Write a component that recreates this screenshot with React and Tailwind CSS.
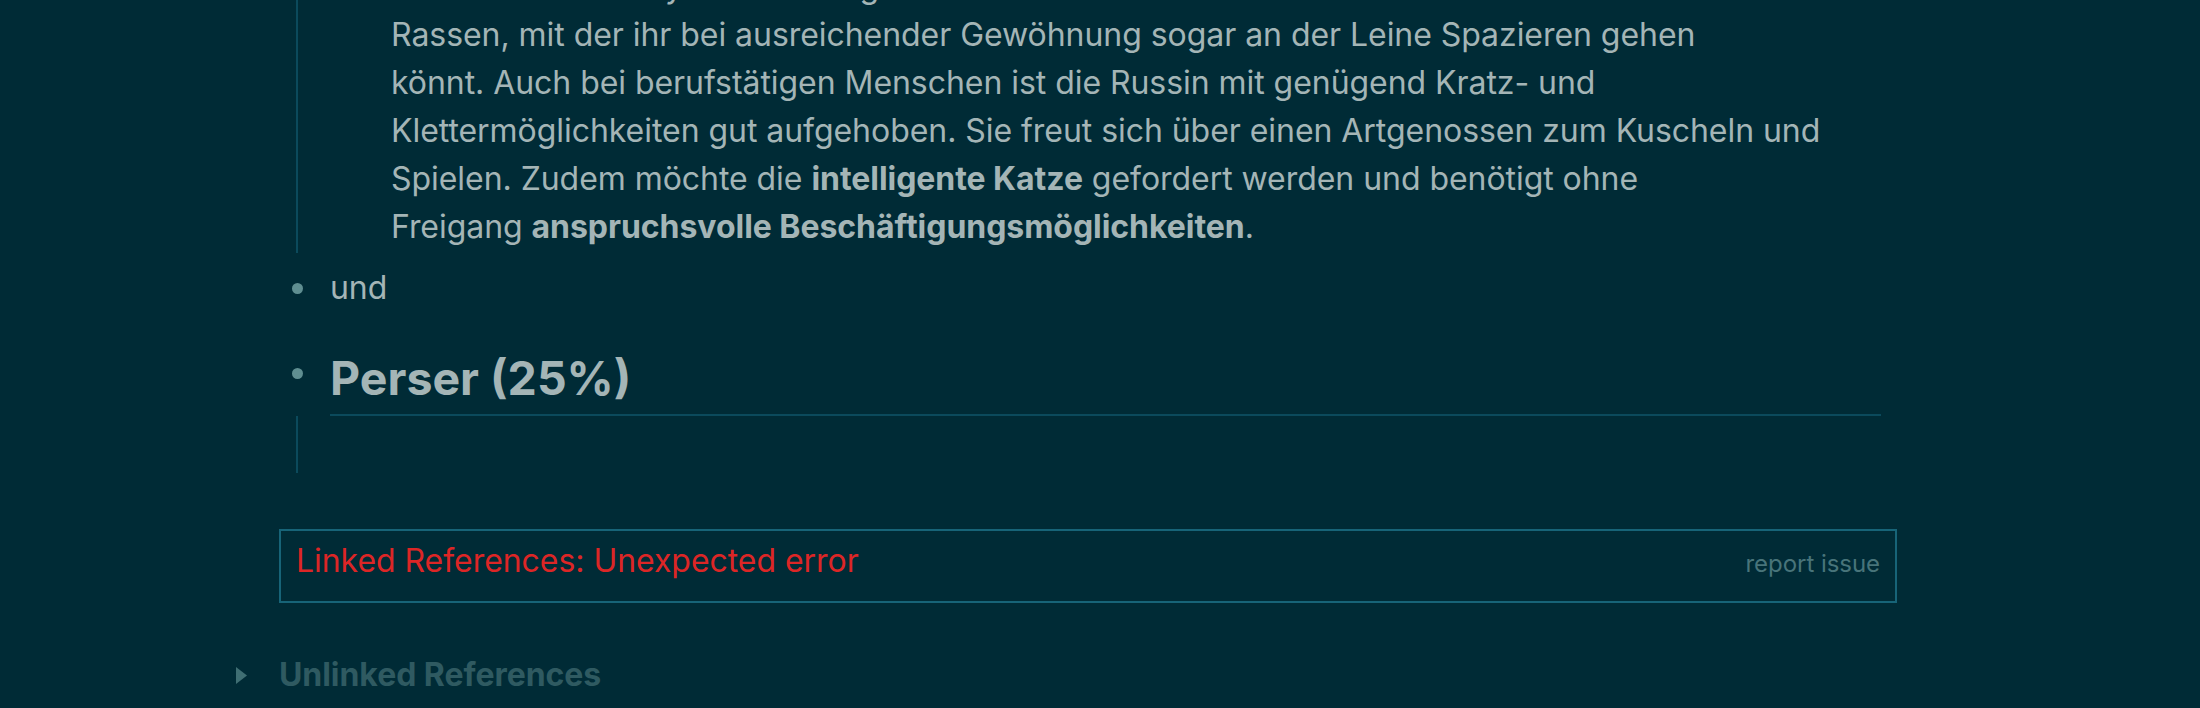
import React from "react";

const lines = [
  "Sie ist eine sehr loyale und ruhige Katze unter den",
  "Rassen, mit der ihr bei ausreichender Gewöhnung sogar an der Leine Spazieren gehen",
  "könnt. Auch bei berufstätigen Menschen ist die Russin mit genügend Kratz- und",
  "Klettermöglichkeiten gut aufgehoben. Sie freut sich über einen Artgenossen zum Kuscheln und",
];

function Bullet({ height }) {
  return (
    <div className={`flex w-[51px] shrink-0 items-center pl-[13px] ${height}`}>
      <span className="h-[11px] w-[11px] rounded-full bg-[#5f8e91]" />
    </div>
  );
}

export default function App() {
  return (
    <div className="h-[708px] overflow-hidden bg-[#002b36] font-['Inter',sans-serif] text-[32px] leading-[48px] tracking-[-0.0015em] text-[#a4b5b6]">
      <div className="ml-[279px] w-[1618px]">
        {/* children of the block above, cut off by the top edge */}
        <div className="-mt-[37px] ml-[17px] border-l-2 border-[#0b4a5c] pb-[2px] pl-[93px]">
          <p className="whitespace-nowrap">
            {lines.map((l) => (
              <React.Fragment key={l}>
                {l}
                <br />
              </React.Fragment>
            ))}
            Spielen. Zudem möchte die <strong className="font-bold">intelligente Katze</strong> gefordert werden und benötigt ohne
            <br />
            Freigang <strong className="font-bold">anspruchsvolle Beschäftigungsmöglichkeiten</strong>.
          </p>
        </div>

        <div className="mt-[11px] flex">
          <Bullet height="h-[48px]" />
          <div>und</div>
        </div>

        <div className="mt-[37px] flex pr-[16px]">
          <Bullet height="h-[48px]" />
          <h2 className="flex-1 border-b-2 border-[#0b4a5c] pb-[7px] text-[46.5px] font-bold leading-[58px] tracking-normal">
            Perser (25%)
          </h2>
        </div>
        <div className="ml-[17px] h-[57px] border-l-2 border-[#0b4a5c]" />

        <div className="mt-[56px] flex h-[74px] items-baseline justify-between border-2 border-[#176478] px-[15px] pt-[6px]">
          <span className="text-[#dc2626]">Linked References: Unexpected error</span>
          <span className="text-[24px] text-[#48747a]">report issue</span>
        </div>
      </div>

      <div className="ml-[236px] mt-[48px] flex items-center gap-[32px]">
        <svg width="11" height="17" viewBox="0 0 11 17" className="shrink-0">
          <polygon points="0,0 11,8.5 0,17" fill="#3f6e73" />
        </svg>
        <span className="font-bold text-[#2f5a61]">Unlinked References</span>
      </div>
    </div>
  );
}
